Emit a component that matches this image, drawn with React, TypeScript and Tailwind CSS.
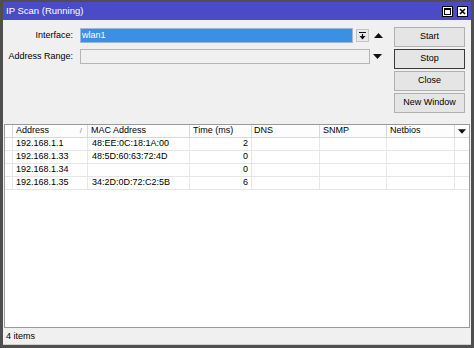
import React from "react";

type Row = { address: string; mac: string; time: string };

const rows: Row[] = [
  { address: "192.168.1.1", mac: "48:EE:0C:18:1A:00", time: "2" },
  { address: "192.168.1.33", mac: "48:5D:60:63:72:4D", time: "0" },
  { address: "192.168.1.34", mac: "", time: "0" },
  { address: "192.168.1.35", mac: "34:2D:0D:72:C2:5B", time: "6" },
];

const UpTri = () => (
  <svg width="9" height="5" viewBox="0 0 9 5">
    <polygon points="0,5 9,5 4.5,0" fill="#111" />
  </svg>
);

const DownTri = ({ w = 9, h = 5 }: { w?: number; h?: number }) => (
  <svg width={w} height={h} viewBox="0 0 9 5">
    <polygon points="0,0 9,0 4.5,5" fill="#111" />
  </svg>
);

const App: React.FC = () => {
  return (
    <div
      className="w-[474px] h-[348px] bg-[#4f4f4f] flex flex-col pl-[3px] pr-[3px] pt-[2px] pb-[3px] text-[9px] text-black"
      style={{ fontFamily: '"Liberation Sans", Arial, sans-serif' }}
    >
      {/* title bar */}
      <div className="h-[18px] bg-[#4b4bc8] flex items-center pl-[3px] pr-[3px]">
        <span className="text-white text-[9.5px] flex-1">IP Scan (Running)</span>
        <div className="w-[11px] h-[11px] bg-white border border-black flex items-center justify-center mr-[4px]">
          <div className="w-[7px] h-[7px] border border-black border-t-2" />
        </div>
        <div className="w-[11px] h-[11px] bg-white border border-black flex items-center justify-center">
          <svg width="7" height="7" viewBox="0 0 7 7">
            <path d="M1 1 L6 6 M6 1 L1 6" stroke="#000" strokeWidth="1.6" />
          </svg>
        </div>
      </div>

      {/* body */}
      <div className="flex-1 bg-[#f0f0f0] flex flex-col">
        <div className="flex pt-[7px] pr-[6px]">
          <div className="flex-1 flex flex-col gap-[6px] pt-[1px]">
            <div className="flex items-center h-[15px]">
              <span className="w-[70px] text-right">Interface:</span>
              <div className="ml-[7px] w-[273px] h-[15px] bg-[#3d8fe3] border border-[#9fb8d4] text-white flex items-center pl-[1px]">
                wlan1
              </div>
              <div className="ml-[3px] w-[13px] h-[13px] bg-[#e9e9e9] border border-[#c4c4c4] flex items-center justify-center">
                <svg width="7" height="8" viewBox="0 0 7 8">
                  <path d="M0 0.5 H7" stroke="#111" strokeWidth="1" />
                  <path d="M3.5 2 V5" stroke="#111" strokeWidth="1.2" />
                  <polygon points="0.5,4 6.5,4 3.5,7.5" fill="#111" />
                </svg>
              </div>
              <div className="ml-[5px] flex items-center">
                <UpTri />
              </div>
            </div>
            <div className="flex items-center h-[15px]">
              <span className="w-[70px] text-right">Address Range:</span>
              <div className="ml-[7px] w-[290px] h-[15px] bg-[#f0f0f0] border border-[#b5b5b5]" />
              <div className="ml-[3px] flex items-center">
                <DownTri />
              </div>
            </div>
          </div>
          <div className="flex flex-col gap-[2px] w-[71px]">
            <button className="h-[20px] bg-[#e5e5e5] border border-[#b0b0b0]">Start</button>
            <button className="h-[20px] bg-[#e5e5e5] border border-[#3a3a3a]">Stop</button>
            <button className="h-[20px] bg-[#e5e5e5] border border-[#b0b0b0]">Close</button>
            <button className="h-[20px] bg-[#e5e5e5] border border-[#b0b0b0]">New Window</button>
          </div>
        </div>

        {/* table */}
        <div className="mt-[11px] mx-[1px] flex-1 bg-white border border-[#9a9a9a] flex flex-col">
          <div className="flex h-[13px] border-b border-[#d8d8d8] bg-[#fdfdfd]">
            <div className="w-[8px] border-r border-[#d8d8d8]" />
            <div className="w-[75px] border-r border-[#d8d8d8] pl-[3px] flex items-center">
              <span className="flex-1">Address</span>
              <span className="text-[#888] text-[8px] pr-[5px]">/</span>
            </div>
            <div className="w-[102px] border-r border-[#d8d8d8] pl-[3px] flex items-center">MAC Address</div>
            <div className="w-[62px] border-r border-[#d8d8d8] pl-[3px] flex items-center">Time (ms)</div>
            <div className="w-[68px] border-r border-[#d8d8d8] pl-[2px] flex items-center">DNS</div>
            <div className="w-[67px] border-r border-[#d8d8d8] pl-[3px] flex items-center">SNMP</div>
            <div className="w-[68px] border-r border-[#d8d8d8] pl-[3px] flex items-center">Netbios</div>
            <div className="flex-1 flex items-center justify-center">
              <DownTri w={8} h={5} />
            </div>
          </div>
          {rows.map((r) => (
            <div key={r.address} className="flex h-[13px] border-b border-[#e6e6e6]">
              <div className="w-[8px] border-r border-[#e6e6e6]" />
              <div className="w-[75px] border-r border-[#e6e6e6] pl-[3px] flex items-center">{r.address}</div>
              <div className="w-[102px] border-r border-[#e6e6e6] pl-[4px] flex items-center">{r.mac}</div>
              <div className="w-[62px] border-r border-[#e6e6e6] pr-[3px] flex items-center justify-end">{r.time}</div>
              <div className="w-[68px] border-r border-[#e6e6e6]" />
              <div className="w-[67px] border-r border-[#e6e6e6]" />
              <div className="w-[68px] border-r border-[#e6e6e6]" />
              <div className="flex-1" />
            </div>
          ))}
        </div>

        {/* status bar */}
        <div className="h-[17px] flex items-center pl-[3px] pt-[2px] border-b border-[#d0d0d0]">4 items</div>
      </div>
    </div>
  );
};

export default App;
